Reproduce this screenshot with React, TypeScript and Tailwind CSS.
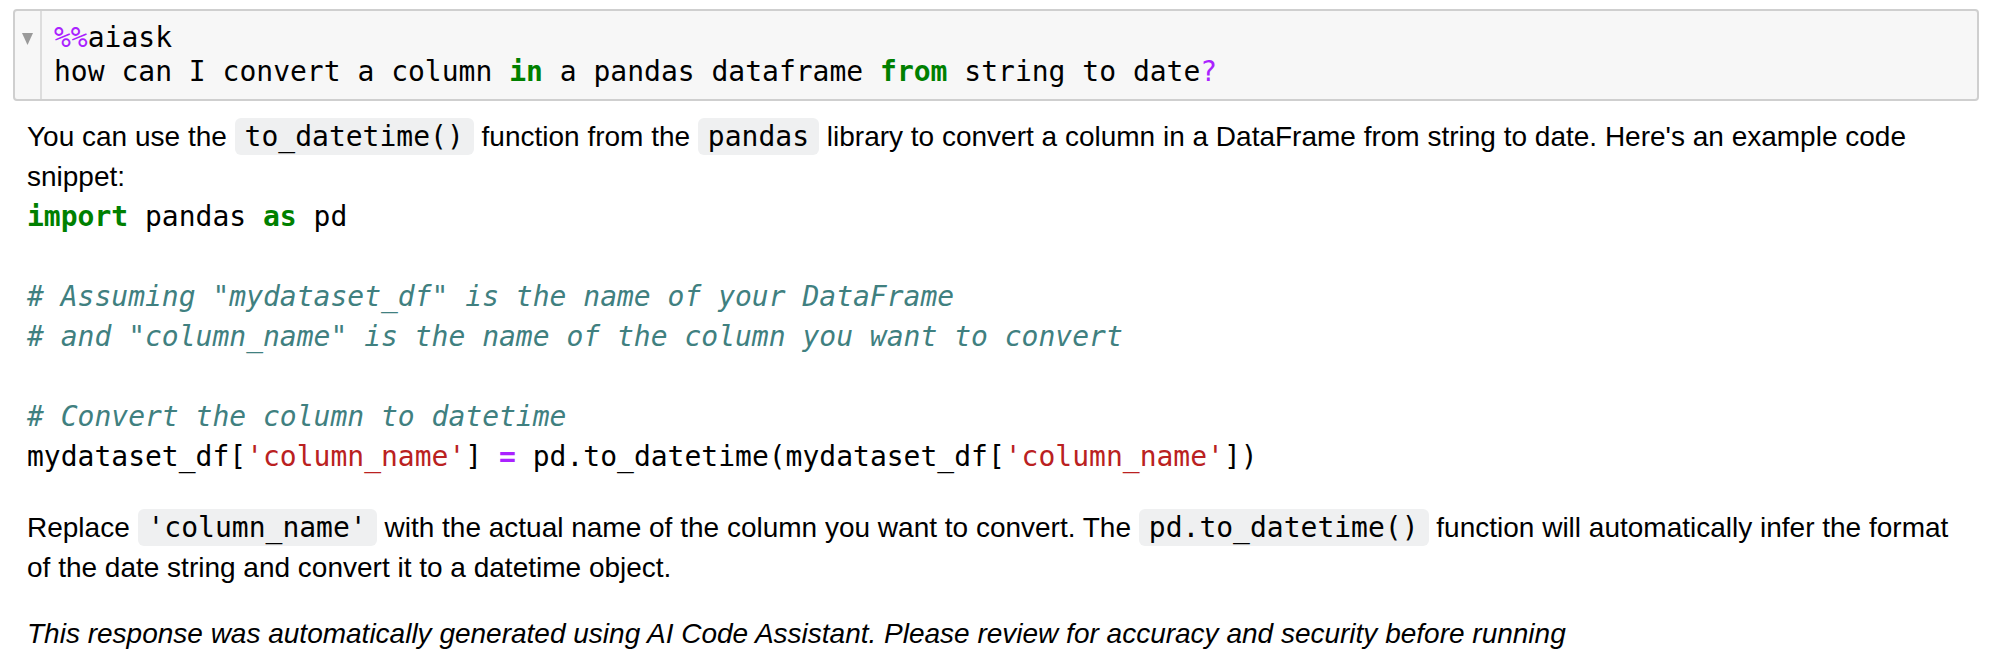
const mono = "font-['DejaVu_Sans_Mono','Liberation_Mono',monospace]";

const Chip = ({ children }: { children: React.ReactNode }) => (
  <code className={`${mono} bg-[#eff0f1] rounded-[6px] px-[10px] py-[2px] text-[28px]`}>{children}</code>
);

const Kw = ({ children }: { children: React.ReactNode }) => (
  <span className="text-[#008000] font-bold">{children}</span>
);
const Cm = ({ children }: { children: React.ReactNode }) => (
  <span className="text-[#408080] italic">{children}</span>
);
const Str = ({ children }: { children: React.ReactNode }) => (
  <span className="text-[#ba2121]">{children}</span>
);
const Op = ({ children }: { children: React.ReactNode }) => (
  <span className="text-[#aa22ff] font-bold">{children}</span>
);

const PromptCell = () => {
  return (
    <div className="flex h-[92px] border-2 border-[#cfcfcf] rounded-[4px] bg-[#f7f7f7]">
      <div className="w-[27px] shrink-0 border-r-2 border-[#dddddd] flex justify-center pt-[22px]">
        <svg width="11" height="12" viewBox="0 0 11 12">
          <polygon points="0,0 11,0 5.5,12" fill="#9a9a9a" />
        </svg>
      </div>
      <div className={`${mono} text-[28px] leading-[34px] text-black pl-[12px] pt-[10px] whitespace-pre`}>
        <div>
          <span className="text-[#aa22ff]">%%</span>aiask
        </div>
        <div>
          how can I convert a column <Kw>in</Kw> a pandas dataframe <Kw>from</Kw> string to date
          <span className="text-[#aa22ff]">?</span>
        </div>
      </div>
    </div>
  );
};

const App = () => {
  return (
    <div className="w-[1992px] h-[664px] bg-white pt-[9px] px-[13px] overflow-hidden">
      <PromptCell />
      <div className="pl-[14px] pr-[20px] font-['Liberation_Sans',Arial,sans-serif] text-[28px] leading-[40px] text-black">
        <p className="mt-[16px]">
          You can use the <Chip>to_datetime()</Chip> function from the <Chip>pandas</Chip> library to convert a
          column in a DataFrame from string to date. Here's an example code snippet:
        </p>
        <pre className={`${mono} text-[28px] leading-[40px] text-black`}>
          <Kw>import</Kw> pandas <Kw>as</Kw> pd{"\n"}
          {"\n"}
          <Cm># Assuming "mydataset_df" is the name of your DataFrame</Cm>
          {"\n"}
          <Cm># and "column_name" is the name of the column you want to convert</Cm>
          {"\n"}
          {"\n"}
          <Cm># Convert the column to datetime</Cm>
          {"\n"}
          mydataset_df[<Str>'column_name'</Str>] <Op>=</Op> pd.to_datetime(mydataset_df[<Str>'column_name'</Str>])
        </pre>
        <p className="mt-[31px]">
          Replace <Chip>'column_name'</Chip> with the actual name of the column you want to convert. The{" "}
          <Chip>pd.to_datetime()</Chip> function will automatically infer the format of the date string and convert
          it to a datetime object.
        </p>
        <p className="mt-[26px] italic">
          This response was automatically generated using AI Code Assistant. Please review for accuracy and
          security before running
        </p>
      </div>
    </div>
  );
};

export default App;
